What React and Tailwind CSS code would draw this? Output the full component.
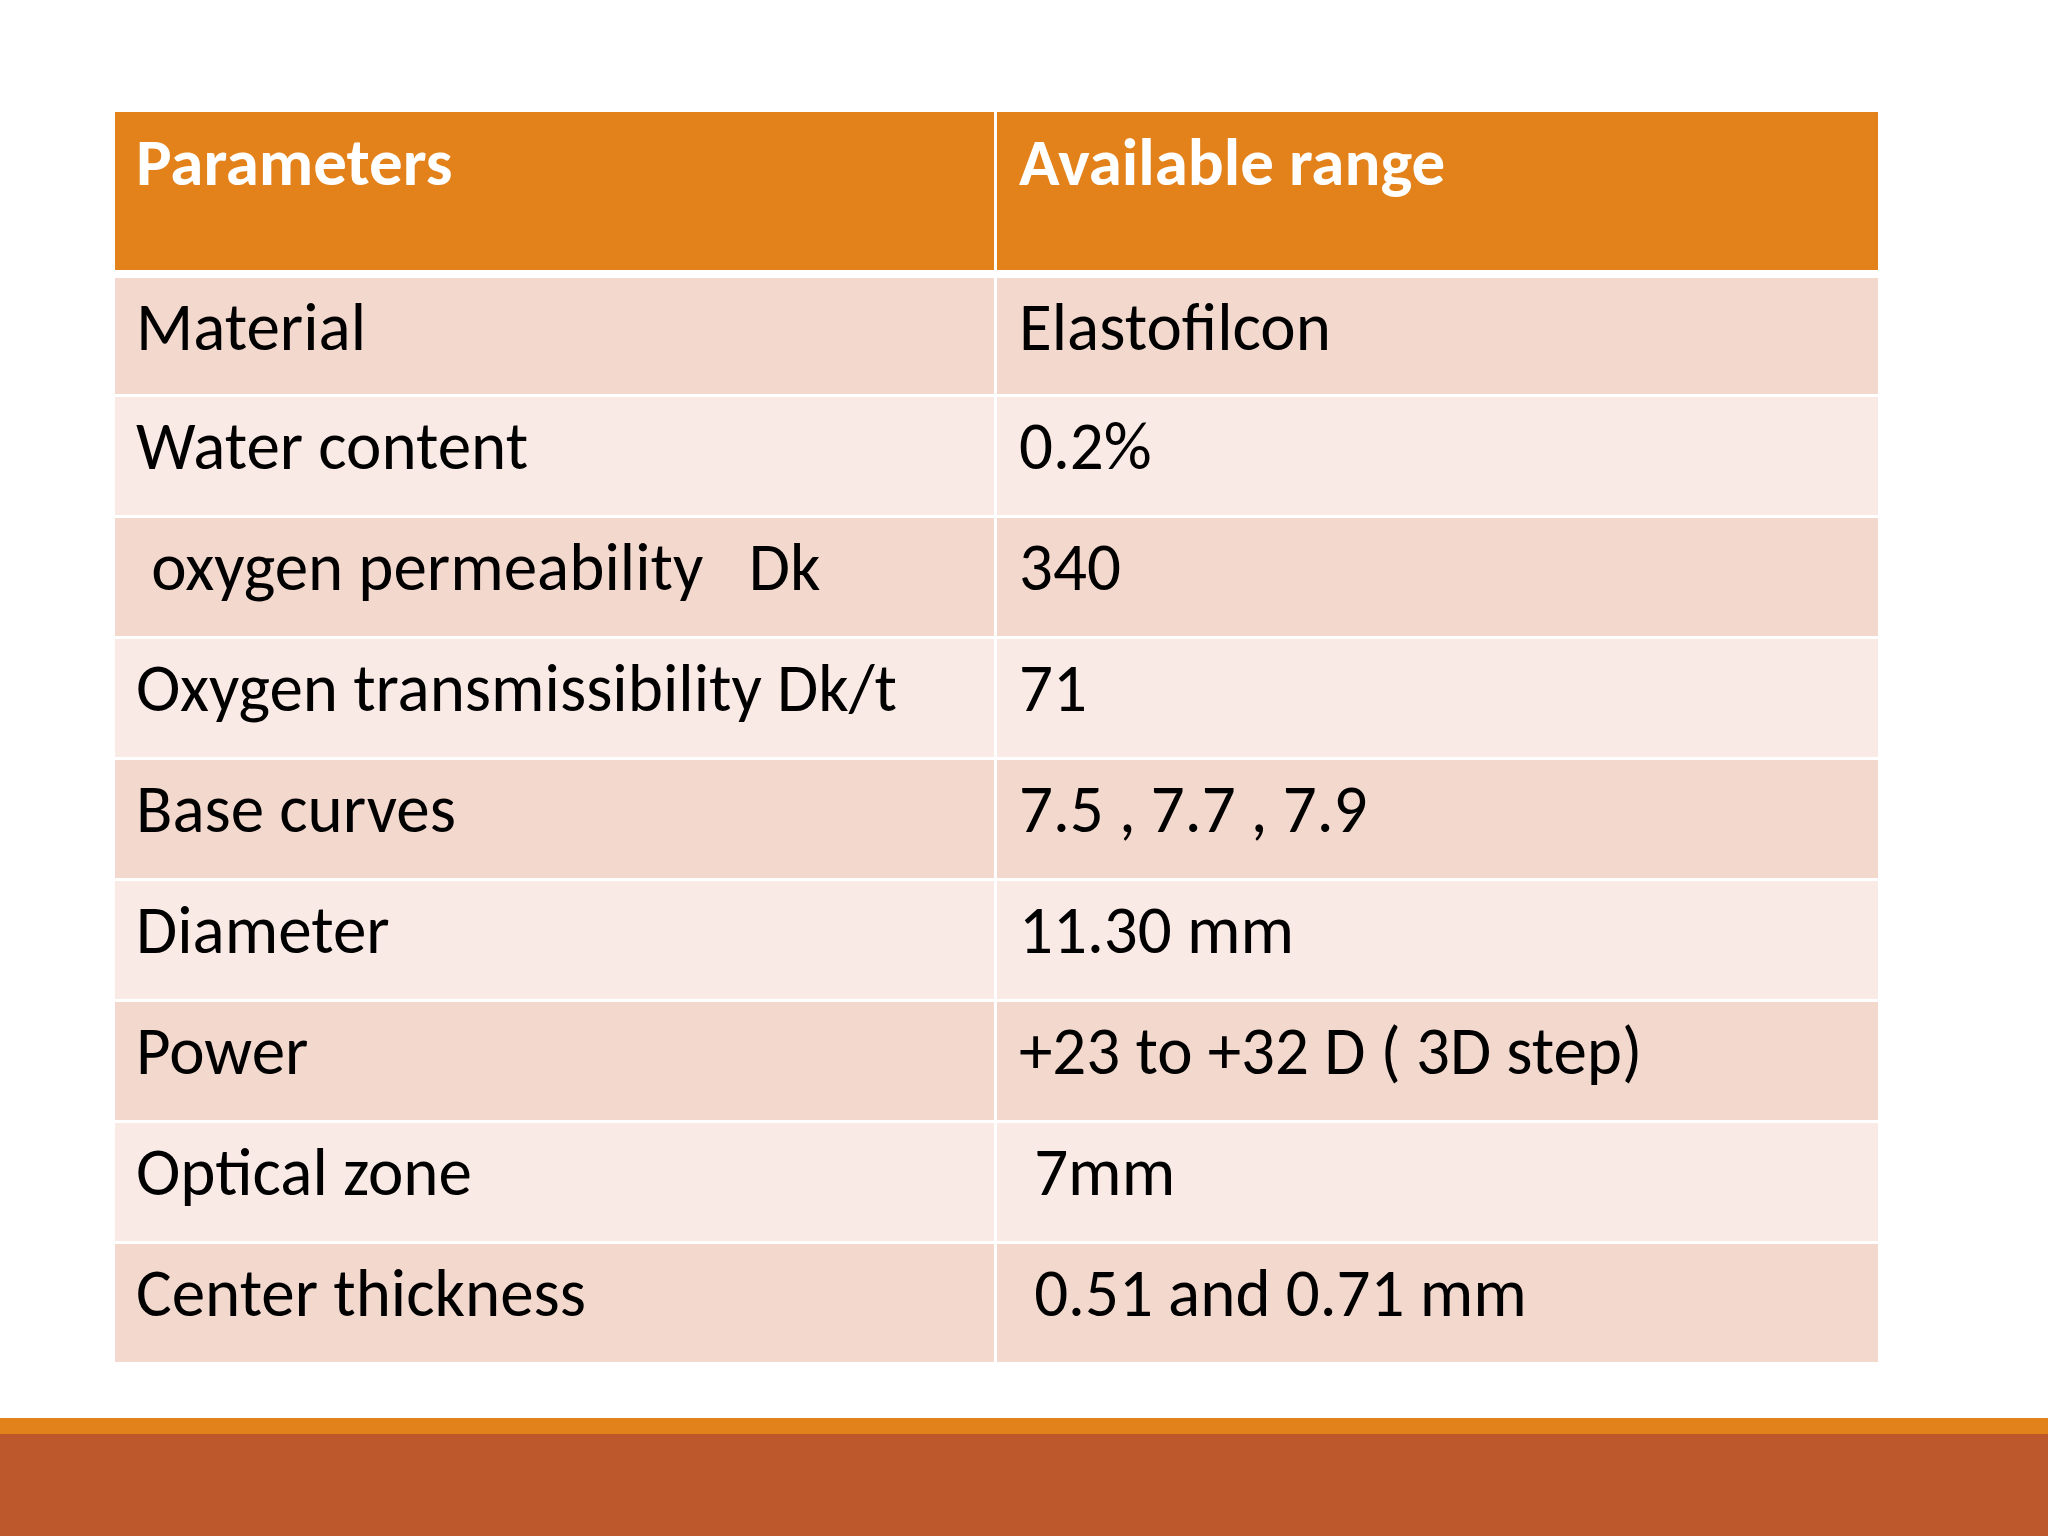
import React from 'react';

const rows = [
  ['Material', 'Elastofilcon'],
  ['Water content', '0.2%'],
  [' oxygen permeability   Dk', '340'],
  ['Oxygen transmissibility Dk/t', '71'],
  ['Base curves', '7.5 , 7.7 , 7.9'],
  ['Diameter', '11.30 mm'],
  ['Power', '+23 to +32 D ( 3D step)'],
  ['Optical zone', ' 7mm'],
  ['Center thickness', ' 0.51 and 0.71 mm'],
];

export default function App() {
  return (
    <div
      className="w-[2048px] h-[1536px] bg-white flex flex-col overflow-hidden"
      style={{ fontFamily: 'Carlito, Lato, "Noto Sans", sans-serif' }}
    >
      {/* Table */}
      <div className="pt-[112px] pl-[115px]">
        <div className="w-[1763px] flex flex-col">
          <div className="flex h-[158px] bg-[#e3821a] text-white font-bold text-[67px] leading-none">
            <div className="w-[882px] pl-[21px] pt-[17px] border-r-[3px] border-white">Parameters</div>
            <div className="flex-1 pl-[22px] pt-[17px]">Available range</div>
          </div>
          {rows.map(([param, value], idx) => (
            <div
              key={idx}
              className={`flex text-black text-[67px] leading-none ${
                idx === 0 ? 'h-[124px] border-t-[8px]' : 'h-[121px] border-t-[3px]'
              } border-white ${idx % 2 === 0 ? 'bg-[#f3d8ce]' : 'bg-[#f9eae6]'}`}
            >
              <div className="w-[882px] pl-[21px] pt-[16px] border-r-[3px] border-white whitespace-pre">{param}</div>
              <div className="flex-1 pl-[22px] pt-[16px] whitespace-pre">{value}</div>
            </div>
          ))}
        </div>
      </div>

      <div className="flex-1" />

      {/* Bottom bands */}
      <div className="h-[16px] bg-[#e2821a]" />
      <div className="h-[102px] bg-[#bd582c]" />
    </div>
  );
}
